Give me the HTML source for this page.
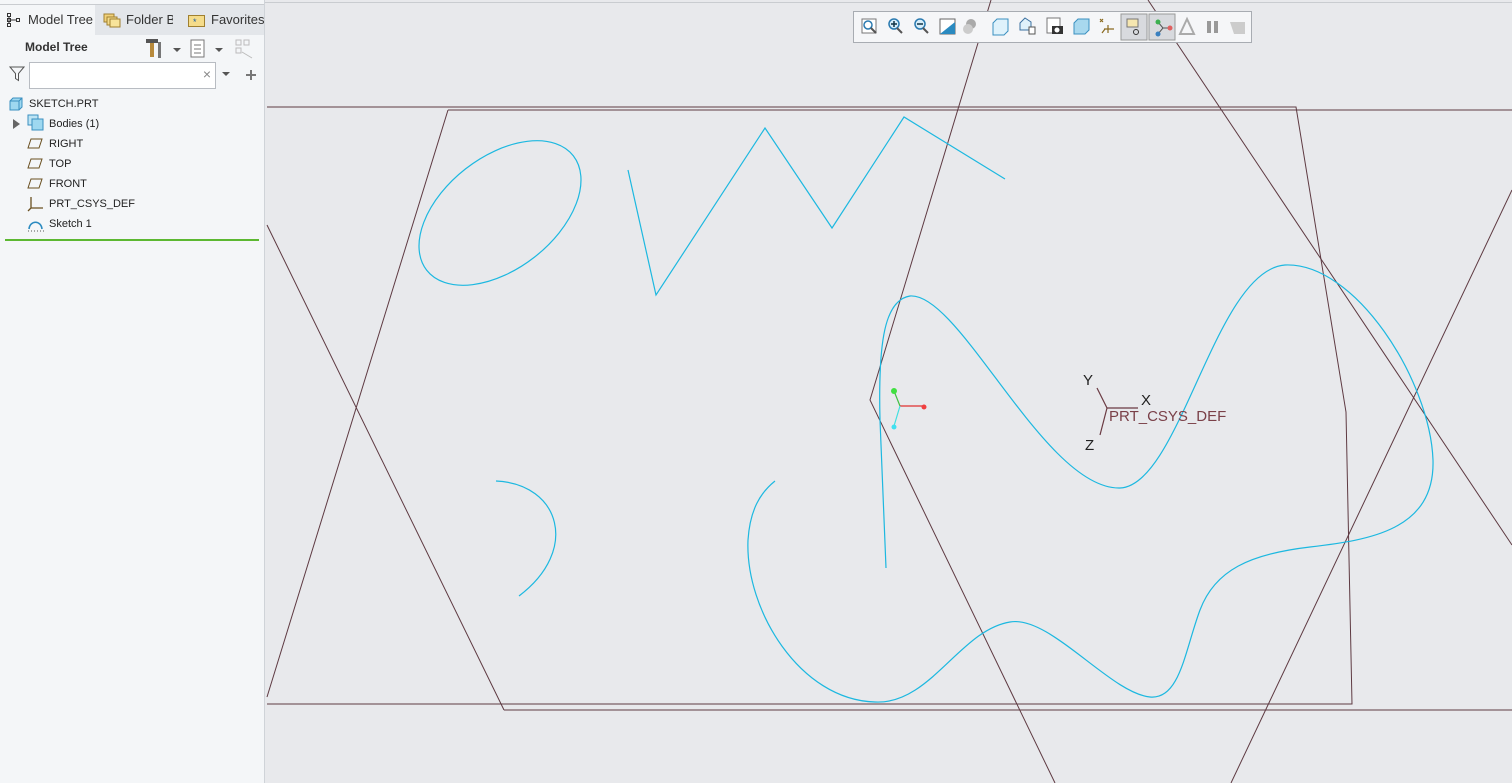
<!DOCTYPE html>
<html><head><meta charset="utf-8"><style>
html,body{margin:0;padding:0;width:1512px;height:783px;overflow:hidden;background:#e8e9ec;font-family:"Liberation Sans",sans-serif;}
#left{position:absolute;left:0;top:0;width:264px;height:783px;background:#f4f6f8;border-right:1px solid #cfd3d8;}
#tabs{position:absolute;left:0;top:4px;width:264px;height:30px;background:#e3e6ea;border-top:1px solid #c9ccd0;}
.tab{position:absolute;top:0;height:30px;font-size:13px;line-height:30px;color:#333;white-space:nowrap;overflow:hidden}
#topline{position:absolute;left:264px;top:2px;width:1248px;height:1px;background:#c9ccd0}
.item{position:absolute;left:0;font-size:11px;color:#222;height:20px;line-height:20px}
#tb{position:absolute;left:853px;top:11px;width:397px;height:30px;background:#f5f6f8;border:1px solid #a8acb2;}
</style></head><body>
<div id="topline"></div>
<div id="left">
 <div id="tabs">
  <div class="tab" style="left:0;width:95px;background:#f4f6f8;height:31px">
   <svg style="position:absolute;left:7px;top:8px" width="14" height="14"><g fill="none" stroke="#333" stroke-width="1"><rect x="0.5" y="0.5" width="3" height="3"/><rect x="0.5" y="5.5" width="3" height="3"/><rect x="0.5" y="10.5" width="3" height="3"/><rect x="9.5" y="5.5" width="3" height="3"/><path d="M2 4v7M4 7h5"/></g></svg>
   <span style="position:absolute;left:28px">Model Tree</span></div>
  <div class="tab" style="left:103px;width:70px">
   <svg style="position:absolute;left:0;top:8px" width="18" height="15"><rect x="1" y="1" width="10" height="8" fill="#f2d27a" stroke="#a08030"/><rect x="4" y="4" width="10" height="8" fill="#f5dc8a" stroke="#a08030"/><rect x="7" y="6" width="10" height="8" fill="#f8e49a" stroke="#a08030"/></svg>
   <span style="position:absolute;left:23px">Folder Br</span></div>
  <div class="tab" style="left:188px;width:76px">
   <svg style="position:absolute;left:0;top:8px" width="18" height="15"><rect x="0.5" y="2.5" width="16" height="11" fill="#f5dc8a" stroke="#a08030"/><text x="5" y="12" font-size="9" fill="#2060a0">*</text></svg>
   <span style="position:absolute;left:23px">Favorites</span></div>
 </div>
 <div style="position:absolute;left:25px;top:40px;font-size:12px;font-weight:bold;color:#333">Model Tree</div>
 <svg style="position:absolute;left:146px;top:38px" width="110" height="22">
  <rect x="4" y="2" width="4" height="17" fill="#b88a3c"/><rect x="0" y="1" width="12" height="4" fill="#555"/><rect x="12" y="4" width="3" height="16" fill="#777"/>
  <path d="M27 10l4 4l4-4z" fill="#555"/>
  <rect x="45" y="2" width="13" height="17" fill="#fff" stroke="#777"/><path d="M48 7h7M48 11h7M48 15h7" stroke="#777"/>
  <path d="M69 10l4 4l4-4z" fill="#555"/>
  <g fill="none" stroke="#bbb"><rect x="90" y="2" width="5" height="5"/><rect x="98" y="2" width="5" height="5"/><rect x="90" y="10" width="5" height="5"/><path d="M96 14l10 6"/></g>
 </svg>
 <svg style="position:absolute;left:9px;top:66px" width="16" height="16"><path d="M1 1h14l-5.5 6.5v7l-3-2v-5z" fill="none" stroke="#555"/></svg>
 <div style="position:absolute;left:29px;top:62px;width:185px;height:25px;background:#fff;border:1px solid #b8bcc2"><span style="position:absolute;right:4px;top:3px;color:#888;font-size:14px">×</span></div>
 <svg style="position:absolute;left:220px;top:70px" width="40" height="12"><path d="M2 2l4 4l4-4z" fill="#555"/><path d="M26 5h10M31 0v10" stroke="#777" stroke-width="2"/></svg>
 <svg style="position:absolute;left:8px;top:96px" width="16" height="16"><path d="M2 5l3-3h9v9l-3 3H2z" fill="#9ed8f0" stroke="#3a90c0"/><path d="M2 5h9v9M11 5l3-3" fill="none" stroke="#3a90c0"/></svg>
 <div class="item" style="left:29px;top:94px">SKETCH.PRT</div>
 <svg style="position:absolute;left:13px;top:119px" width="8" height="10"><path d="M0 0l7 5l-7 5z" fill="#666"/></svg>
 <svg style="position:absolute;left:27px;top:114px" width="18" height="18"><rect x="1" y="1" width="10" height="10" fill="#bde4f4" stroke="#3a90c0"/><rect x="5" y="5" width="11" height="11" fill="#9ed8f0" stroke="#3a90c0"/></svg>
 <div class="item" style="left:49px;top:114px">Bodies (1)</div>
 <svg style="position:absolute;left:27px;top:138px" width="16" height="12"><path d="M4 1h11l-3 9H1z" fill="none" stroke="#6a5020"/></svg>
 <div class="item" style="left:49px;top:134px">RIGHT</div>
 <svg style="position:absolute;left:27px;top:158px" width="16" height="12"><path d="M4 1h11l-3 9H1z" fill="none" stroke="#6a5020"/></svg>
 <div class="item" style="left:49px;top:154px">TOP</div>
 <svg style="position:absolute;left:27px;top:178px" width="16" height="12"><path d="M4 1h11l-3 9H1z" fill="none" stroke="#6a5020"/></svg>
 <div class="item" style="left:49px;top:174px">FRONT</div>
 <svg style="position:absolute;left:27px;top:196px" width="18" height="16"><path d="M4 1v11h12M4 12l-3 3" fill="none" stroke="#6a5020" stroke-width="1.3"/></svg>
 <div class="item" style="left:49px;top:194px">PRT_CSYS_DEF</div>
 <svg style="position:absolute;left:27px;top:216px" width="18" height="16"><path d="M2 13C3 4 14 4 15 13" fill="none" stroke="#2a8ac0" stroke-width="1.6"/><path d="M1 15h16" stroke="#555" stroke-dasharray="1 2"/></svg>
 <div class="item" style="left:49px;top:214px">Sketch 1</div>
 <div style="position:absolute;left:5px;top:239px;width:254px;height:2px;background:#5cb832"></div>
</div>

<svg style="position:absolute;left:0;top:0" width="1512" height="783">
 <g stroke="#5e3a42" stroke-width="1" fill="none">
  <path d="M267 107H1296L1346 412L1352 704H267"/>
  <path d="M448 110H1512M504 710H1512"/>
  <path d="M448 110L267 697M267 225L504 710"/>
  <path d="M991 0L870 400L1055 783"/>
  <path d="M1148 0L1512 545M1512 190L1231 783"/>
 </g>
 <g stroke="#1cb8e0" stroke-width="1.2" fill="none">
  <ellipse cx="500" cy="213" rx="93" ry="56" transform="rotate(-38 500 213)"/>
  <path d="M628 170L656 295L765 128L832 228L904 117L1005 179"/>
  <path d="M496 481C560 484 580 550 519 596"/>
  <path d="M886 568L880 420C878 340 885 300 910 296C960 292 1045 490 1120 488C1180 486 1215 270 1285 265C1355 262 1430 380 1433 460C1435 530 1370 540 1310 547C1250 554 1215 570 1200 610C1185 650 1180 700 1150 697C1110 693 1050 615 1010 622C960 630 930 705 875 702C800 700 745 610 748 540C750 510 760 493 775 481"/>
 </g>
 <path d="M900 406L894 391" stroke="#40c040" stroke-width="1.2"/><circle cx="894" cy="391" r="3" fill="#40e040"/>
 <path d="M900 406H924" stroke="#e03030" stroke-width="1.2"/><circle cx="924" cy="407" r="2.5" fill="#f04040"/>
 <path d="M900 406L894 426" stroke="#40e0e0" stroke-width="1.2"/><circle cx="894" cy="427" r="2.5" fill="#40e0f0"/>
 <g stroke="#6a3a42" stroke-width="1.2" fill="none"><path d="M1107 408L1097 388M1107 408H1138M1107 408L1100 435"/></g>
 <g font-family="Liberation Sans,sans-serif" font-size="15">
  <text x="1083" y="385" fill="#222">Y</text><text x="1141" y="405" fill="#222">X</text><text x="1085" y="450" fill="#222">Z</text>
  <text x="1109" y="421" fill="#7a4048">PRT_CSYS_DEF</text>
 </g>
</svg>

<div id="tb">
<svg width="397" height="30">
 <g transform="translate(7,6)"><rect x="1" y="1" width="14" height="14" fill="#fff" stroke="#777"/><circle cx="7" cy="7" r="4" fill="none" stroke="#2a7ab0" stroke-width="1.5"/><path d="M10 10l5 5" stroke="#555" stroke-width="2"/></g>
 <g transform="translate(33,6)"><circle cx="7" cy="6" r="5" fill="#d8eefa" stroke="#2a7ab0" stroke-width="1.5"/><path d="M4 6h6M7 3v6" stroke="#134" stroke-width="1.5"/><path d="M10 10l5 5" stroke="#555" stroke-width="2"/></g>
 <g transform="translate(59,6)"><circle cx="7" cy="6" r="5" fill="#d8eefa" stroke="#2a7ab0" stroke-width="1.5"/><path d="M4 6h6" stroke="#134" stroke-width="1.5"/><path d="M10 10l5 5" stroke="#555" stroke-width="2"/></g>
 <g transform="translate(85,6)"><rect x="1" y="1" width="15" height="15" fill="#fff" stroke="#666"/><path d="M1 16L16 4V16z" fill="#2a8ac0"/></g>
 <g transform="translate(108,6)"><circle cx="9" cy="6" r="5" fill="#aaa"/><circle cx="6" cy="11" r="5" fill="#ccc"/></g>
 <g transform="translate(138,6)"><path d="M1 5l4-4h11v12l-4 4H1z" fill="#dff2fb" stroke="#3a90c0"/></g>
 <g transform="translate(164,5)"><path d="M2 6l5-5l6 4v8H2z" fill="#dff2fb" stroke="#3a70a0"/><rect x="11" y="10" width="6" height="7" fill="#fff" stroke="#555"/></g>
 <g transform="translate(192,5)"><rect x="1" y="1" width="13" height="15" fill="#fff" stroke="#777"/><rect x="6" y="9" width="11" height="8" fill="#333"/><circle cx="11" cy="13" r="2.5" fill="#fff"/></g>
 <g transform="translate(218,6)"><path d="M2 5l4-4h11v11l-4 4H2z" fill="#a8d8ee" stroke="#3a90c0"/></g>
 <g transform="translate(244,5)" stroke="#8a6a20" stroke-width="1.2"><path d="M2 2l3 3M5 2l-3 3M6 12h10M10 8v8M4 16l3-4"/></g>
 <rect x="267" y="2" width="26" height="26" fill="#d8dade" stroke="#999"/>
 <g transform="translate(272,6)"><rect x="1" y="1" width="11" height="8" fill="#f5e6b0" stroke="#777"/><circle cx="10" cy="14" r="2.5" fill="none" stroke="#333"/></g>
 <rect x="295" y="2" width="26" height="26" fill="#d8dade" stroke="#999"/>
 <g transform="translate(300,6)"><path d="M4 4L9 10L4 16M9 10h7" stroke="#555" fill="none"/><circle cx="4" cy="4" r="2.5" fill="#3cb050"/><circle cx="16" cy="10" r="2.5" fill="#e06060"/><circle cx="4" cy="16" r="2.5" fill="#3a80c0"/></g>
 <g transform="translate(325,6)"><path d="M8 1L1 16h14z" fill="none" stroke="#aaa" stroke-width="2"/></g>
 <g transform="translate(351,8)"><rect x="2" y="1" width="4" height="12" fill="#999"/><rect x="9" y="1" width="4" height="12" fill="#999"/></g>
 <g transform="translate(374,8)"><path d="M2 2h15v12H6z" fill="#ccc"/></g>
</svg>
</div>
</body></html>
